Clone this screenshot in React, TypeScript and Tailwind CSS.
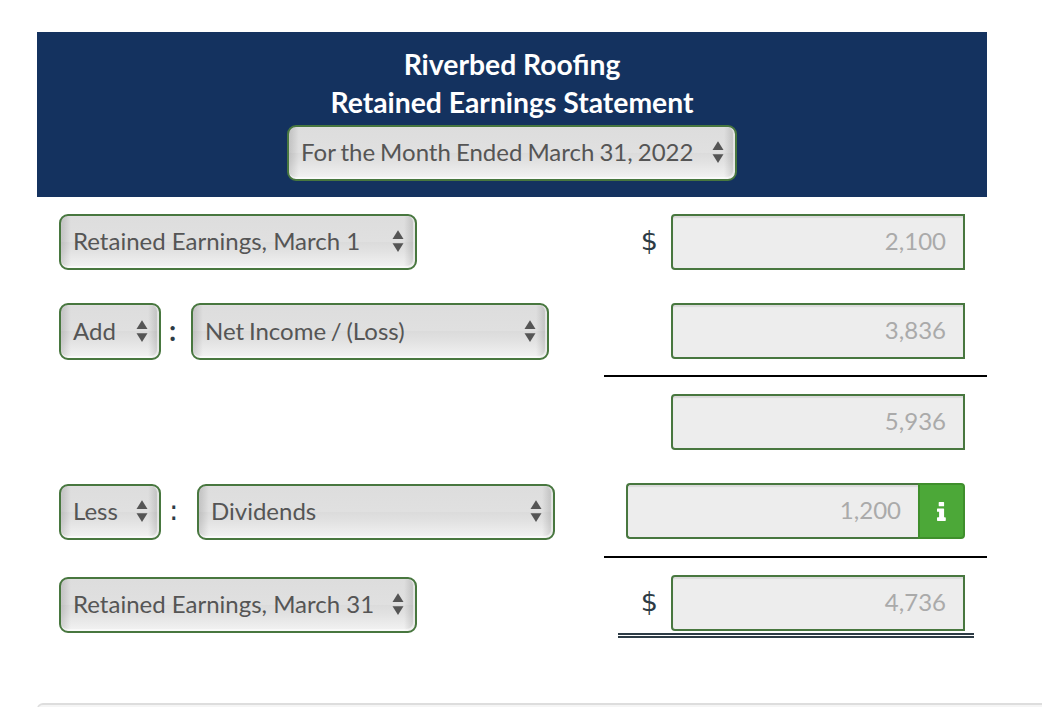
import clsx from "clsx";

function Arrows() {
  return (
    <svg viewBox="0 0 12 22" className="h-[22px] w-3 shrink-0 fill-[#555]">
      <path d="M6 .2 11.5 9H.5z" />
      <path d="M6 22 11.5 13.200H.5z" />
    </svg>
  );
}

function Select({ label, className }: { label: string; className?: string }) {
  return (
    <button
      className={clsx(
        "flex h-14 items-center justify-between rounded-[9px] border-2 border-[#48773f] pr-[11px] pb-[2px] pl-3 text-left text-[24px] whitespace-nowrap text-[#555]",
        "bg-[linear-gradient(90deg,rgba(0,0,0,0.13),transparent_10px,transparent_calc(100%_-_11px),rgba(0,0,0,0.15)),linear-gradient(#dddddd_0%,#e0e0e0_49%,#dbdbdb_50%,#e2e2e2_68%,#f3f3f3_100%)]",
        "shadow-[inset_-1px_-1px_1px_1px_rgba(255,255,255,0.6)]",
        className
      )}
    >
      <span>{label}</span>
      <Arrows />
    </button>
  );
}

function Amount({ value, className }: { value: string; className?: string }) {
  return (
    <input
      disabled
      defaultValue={value}
      className={clsx(
        "h-14 border-2 border-[#48773f] bg-[#ededed] pr-[17px] pb-1 text-right text-[24px] text-[#aaa] shadow-[inset_0_2px_1px_rgba(0,0,0,0.08)]",
        className
      )}
    />
  );
}

function Dollar() {
  return <span className="mr-[13px] font-['DejaVu_Sans'] text-[27px] leading-[53px] text-[#2d3b45]">$</span>;
}

export default function App() {
  return (
    <div className="h-[707px] w-[1042px] overflow-hidden bg-white pt-8 pl-[37px] font-['Lato',sans-serif]">
      <div className="w-[950px]">
        <div className="flex h-[165px] flex-col items-center bg-[#14325f] pt-[13px] text-[28.3px] leading-[38px] font-bold text-white">
          <h1>Riverbed Roofing</h1>
          <h2>Retained Earnings Statement</h2>
          <Select label="For the Month Ended March 31, 2022" className="mt-[4px] w-[450px] font-normal [word-spacing:-1.1px]" />
        </div>

        <div className="flex items-start justify-between">
          <div className="pt-[17px] pl-[22px]">
            <Select label="Retained Earnings, March 1" className="w-[358px]" />
          </div>
          <div className="flex w-[383px] justify-end pt-[17px] pr-[22px]">
            <Dollar />
            <Amount value="2,100" className="w-[294px] rounded-l" />
          </div>
        </div>

        <div className="flex items-start justify-between">
          <div className="flex items-center pt-[33px] pl-[22px]">
            <Select label="Add" className="h-[57px] w-[102px]" />
            <span className="w-[30px] pb-1 pl-2 text-[28px] font-bold text-[#2d3b45]">:</span>
            <Select label="Net Income / (Loss)" className="h-[57px] w-[358px] [word-spacing:-1.4px]" />
          </div>
          <div className="flex w-[383px] justify-end border-b-2 border-black pt-[33px] pr-[22px] pb-4">
            <Amount value="3,836" className="w-[294px] rounded-l" />
          </div>
        </div>

        <div className="flex justify-end pt-[17px] pr-[22px]">
          <Amount value="5,936" className="w-[294px] rounded-l" />
        </div>

        <div className="flex items-start justify-between">
          <div className="flex items-center pt-[34px] pl-[22px]">
            <Select label="Less" className="w-[102px]" />
            <span className="w-9 pb-[3px] pl-2 font-['DejaVu_Sans'] text-[28px] text-[#2d3b45]">:</span>
            <Select label="Dividends" className="w-[358px]" />
          </div>
          <div className="flex w-[383px] justify-end border-b-2 border-black pt-[33px] pr-[22px] pb-[17px]">
            <Amount value="1,200" className="w-[292px] rounded-l border-r-0" />
            <button className="flex h-14 w-[47px] items-center justify-center rounded-r border-2 border-[#3f8f2c] bg-[#4ca838]">
              {/* info glyph */}
              <svg viewBox="0 0 9 19" className="h-[19px] w-[9px] fill-white">
                <path d="M2.300 0h4.200q.6 0 .6.6v3.100q0 .6-.6.6H2.300q-.6 0-.6-.6V.6q0-.6.6-.6zM.6 6.500h5.900q.6 0 .6.6v8.200h1q.7 0 .7.6v2.400q0 .7-.7.7H.7q-.7 0-.7-.7v-2.400q0-.6.7-.6h1.400v-5.500H.6q-.6 0-.6-.6V7.100q0-.6.6-.6z" />
              </svg>
            </button>
          </div>
        </div>

        <div className="flex items-start justify-between">
          <div className="pt-[19px] pl-[22px]">
            <Select label="Retained Earnings, March 31" className="w-[358px]" />
          </div>
          <div className="mr-[13px] flex w-[356px] justify-end border-b-[5px] border-double border-[#2d3b45] pt-[17px] pr-[9px] pb-[2px]">
            <Dollar />
            <Amount value="4,736" className="w-[294px] rounded-l" />
          </div>
        </div>
      </div>

      <div className="mt-[65px] h-10 rounded-tl-md border-t-2 border-l border-[#ddd] bg-[#f5f5f5]" />
    </div>
  );
}
